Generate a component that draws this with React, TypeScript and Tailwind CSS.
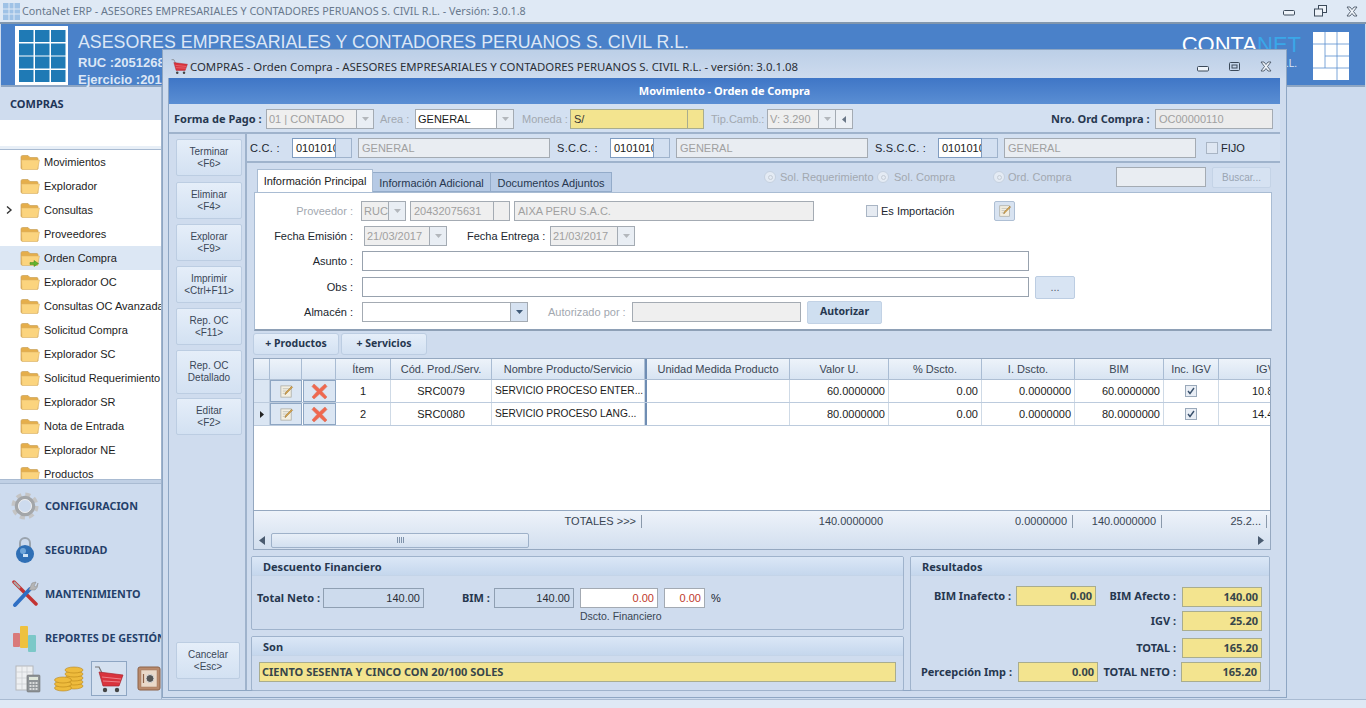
import React from "react";

const menuItems = [
  "Movimientos",
  "Explorador",
  "Consultas",
  "Proveedores",
  "Orden Compra",
  "Explorador OC",
  "Consultas OC Avanzada",
  "Solicitud Compra",
  "Explorador SC",
  "Solicitud Requerimiento",
  "Explorador SR",
  "Nota de Entrada",
  "Explorador NE",
  "Productos",
];

const sideButtons = [
  { label: ["Terminar", "<F6>"], cls: "h-[37px] mb-[6px]" },
  { label: ["Eliminar", "<F4>"], cls: "h-[37px] mb-[5px]" },
  { label: ["Explorar", "<F9>"], cls: "h-[37px] mb-[5px]" },
  { label: ["Imprimir", "<Ctrl+F11>"], cls: "h-[37px] mb-[5px]" },
  { label: ["Rep. OC", "<F11>"], cls: "h-[37px] mb-[5px]" },
  { label: ["Rep. OC", "Detallado"], cls: "h-[44px] mb-[4px]" },
  { label: ["Editar", "<F2>"], cls: "h-[37px]" },
];

const columns = ["", "", "", "Ítem", "Cód. Prod./Serv.", "Nombre Producto/Servicio", "Unidad Medida Producto", "Valor U.", "% Dscto.", "I. Dscto.", "BIM", "Inc. IGV", "IGV"];

const rows = [
  { item: "1", cod: "SRC0079", name: "SERVICIO PROCESO ENTER...", valor: "60.0000000", bim: "60.0000000", igv: "10.8000000" },
  { item: "2", cod: "SRC0080", name: "SERVICIO PROCESO LANG...", valor: "80.0000000", bim: "80.0000000", igv: "14.4000000" },
];

const gridCols = "grid grid-cols-[16px_32px_34px_55px_101px_153px_145px_99px_93px_93px_89px_55px_94px] w-[1059px]";

function Folder({ arrow }: { arrow?: boolean }) {
  return (
    <svg width="21" height="17" viewBox="0 0 21 17" className="shrink-0">
      <path d="M1 3 Q1 1.5 2.5 1.5 H8 L10 3.5 H17 Q18 3.5 18 5 V15 H2 Q1 15 1 14 Z" fill="#e5ae4b" stroke="#c9a25c" strokeWidth="0.7" />
      <path d="M1.5 6 H19.5 L17.5 15.5 H2 Z" fill="#fbd47e" stroke="#d9b068" strokeWidth="0.5" />
      {arrow && <path d="M10 12.5 H14 V10.5 L18.5 13.5 L14 16.5 V14.5 H10 Z" fill="#62b32f" stroke="#3e8a1a" strokeWidth="0.5" />}
    </svg>
  );
}

function LogoLeft() {
  return (
    <svg width="53" height="59" viewBox="0 0 53 59" className="shrink-0">
      <rect width="53" height="59" fill="#fff" />
      {[4, 20, 36].map((x) =>
        [4, 17.5, 30.5, 44].map((y) => <rect key={`${x}-${y}`} x={x} y={y} width="14.5" height="12" fill="#1f7ab5" />)
      )}
    </svg>
  );
}

function LogoRight() {
  return (
    <svg width="36" height="48" viewBox="0 0 36 48" className="shrink-0">
      <rect width="36" height="48" fill="#fff" />
      <path d="M12 0 V36 M24 0 V48 M0 12 H36 M12 24 H36 M0 36 H36" stroke="#5b8fcf" strokeWidth="0.8" />
    </svg>
  );
}

function EditIcon({ size = 15 }: { size?: number }) {
  return (
    <svg width={size} height={size} viewBox="0 0 16 16">
      <rect x="2" y="2" width="11" height="12" fill="#f3efe2" stroke="#a9a9a0" strokeWidth="0.8" />
      <path d="M4 5 H11 M4 7.5 H9 M4 10 H8" stroke="#b9b9b0" strokeWidth="0.8" />
      <path d="M14.5 3.5 L8 10 L6.5 11.5 L7 9 L13.5 2.5 Z" fill="#d9a548" stroke="#8f6a2e" strokeWidth="0.5" />
    </svg>
  );
}

function CrossIcon() {
  return (
    <svg width="17" height="17" viewBox="0 0 17 17">
      <path d="M3 1 L8.5 6 L14 1 L16 3.5 L11 8.5 L16 14 L14 16 L8.5 11 L3 16 L1 14 L6 8.5 L1 3.5 Z" fill="#f0674f" stroke="#d9785f" strokeWidth="0.6" />
    </svg>
  );
}

function Cart({ size = 30 }: { size?: number }) {
  return (
    <svg width={size} height={size} viewBox="0 0 30 30">
      <path d="M1 3 H5 L8 9" fill="none" stroke="#777" strokeWidth="1.2" />
      <path d="M5 8 L29 11 L25 22 H9 Z" fill="#d9333d" stroke="#a9222c" strokeWidth="0.7" />
      <path d="M8 13 L27 15 M9 17 L26 18" stroke="#ee7f88" strokeWidth="1" />
      <circle cx="11" cy="26" r="2.2" fill="#444" />
      <circle cx="23" cy="26" r="2.2" fill="#444" />
    </svg>
  );
}

function GearIcon() {
  return (
    <svg width="28" height="28" viewBox="0 0 28 28">
      <circle cx="14" cy="14" r="11.5" fill="none" stroke="#c4c4c4" strokeWidth="4" strokeDasharray="5 4.03" />
      <circle cx="14" cy="14" r="8.5" fill="none" stroke="#a3a6a9" strokeWidth="3.5" />
      <circle cx="14" cy="14" r="6.5" fill="none" stroke="#eeeeee" strokeWidth="1" />
    </svg>
  );
}

function LockIcon() {
  return (
    <svg width="22" height="28" viewBox="0 0 22 28">
      <path d="M6 13 V7 A5 5 0 0 1 16 7 V13" fill="none" stroke="#9aa3ad" strokeWidth="2" />
      <circle cx="11" cy="18" r="9" fill="#2f6fb5" />
      <circle cx="9" cy="15" r="3" fill="#6fa5d9" />
      <path d="M9 18 H14 V21 H9 Z" fill="#cfe3f5" />
    </svg>
  );
}

function ToolsIcon() {
  return (
    <svg width="28" height="28" viewBox="0 0 28 28">
      <path d="M3 2 L25 24" stroke="#c33333" strokeWidth="3.5" strokeLinecap="round" />
      <path d="M3 2 L9 8" stroke="#a9a9a9" strokeWidth="2" />
      <path d="M4 25 L19 9" stroke="#2f6fc4" strokeWidth="4" strokeLinecap="round" />
      <path d="M18 10 L21 3 L25 2 L23 6 L25 7 L27 3 Q27 8 24 10 Z" fill="#b5b5b5" stroke="#888" strokeWidth="0.5" />
    </svg>
  );
}

function BarsIcon() {
  return (
    <svg width="26" height="28" viewBox="0 0 26 28">
      <rect x="1" y="9" width="7" height="14" rx="1" fill="#d97a7a" />
      <rect x="8" y="2" width="8" height="22" rx="1" fill="#eec13e" />
      <rect x="16" y="11" width="8" height="17" rx="1" fill="#7cc8c8" />
    </svg>
  );
}

function CalcIcon() {
  return (
    <svg width="26" height="28" viewBox="0 0 26 28">
      <rect x="1" y="1" width="17" height="24" fill="#eef0f2" stroke="#b5b8bb" />
      <path d="M1 7 H18 M1 13 H18 M1 19 H18 M7 1 V25 M12 1 V25" stroke="#c9ccd0" strokeWidth="0.7" />
      <rect x="12" y="10" width="13" height="17" rx="1" fill="#8f9498" stroke="#666" strokeWidth="0.5" />
      <rect x="14" y="12" width="9" height="3" fill="#dfe6da" />
      <path d="M14.5 18 H23 M14.5 21 H23 M14.5 24 H23" stroke="#f2f2f2" strokeWidth="1.4" strokeDasharray="2 1" />
    </svg>
  );
}

function CoinsIcon() {
  return (
    <svg width="30" height="28" viewBox="0 0 30 28">
      <g fill="#eebb3c" stroke="#b98518" strokeWidth="0.6">
        {[18, 14, 10, 6, 2].map((y) => <ellipse key={y} cx="20" cy={y + 3} rx="9" ry="3" />)}
        {[22, 18, 14].map((y) => <ellipse key={y} cx="9" cy={y + 1} rx="8.5" ry="3" />)}
      </g>
    </svg>
  );
}

function SafeIcon() {
  return (
    <svg width="24" height="26" viewBox="0 0 24 26">
      <rect x="1" y="1" width="22" height="23" rx="2" fill="#b98a6c" stroke="#8c6248" />
      <rect x="4" y="4" width="16" height="17" fill="#ead9c9" stroke="#a37a5e" strokeWidth="0.5" />
      <circle cx="13" cy="12.5" r="4" fill="#555" stroke="#ddd" />
      <path d="M6.5 8 V17" stroke="#8c6248" strokeWidth="1.2" />
    </svg>
  );
}

function Arrow({ muted }: { muted?: boolean }) {
  return (
    <svg width="7" height="4" viewBox="0 0 7 4">
      <path d="M0 0 H7 L3.5 4 Z" fill={muted ? "#b3b7bc" : "#3f5a78"} />
    </svg>
  );
}

function Box({ className = "", children, disabled = true }: { className?: string; children?: React.ReactNode; disabled?: boolean }) {
  return (
    <div
      className={`h-5 shrink-0 overflow-hidden whitespace-nowrap border border-[#a4abb3] px-[3px] text-[11px] leading-[18px] ${disabled ? "bg-[#efefef] text-[#a0a0a0]" : "bg-white text-[#1a1a1a]"} ${className}`}
    >
      {children}
    </div>
  );
}

function Combo({ className = "", children, disabled = true, active }: { className?: string; children?: React.ReactNode; disabled?: boolean; active?: boolean }) {
  return (
    <div className={`flex h-5 shrink-0 ${className}`}>
      <Box disabled={disabled} className="min-w-0 flex-1 !px-[2px]">{children}</Box>
      <div className={`flex w-[17px] shrink-0 items-center justify-center border border-l-0 border-[#a4abb3] ${active ? "bg-[#d6e2f1]" : "bg-[#e9eef4]"}`}>
        <Arrow muted={!active} />
      </div>
    </div>
  );
}

function CodeField({ className = "" }: { className?: string }) {
  return (
    <div className={`flex h-5 shrink-0 ${className}`}>
      <Box disabled={false} className="w-[44px] !border-[#7f9cc0]">0101010</Box>
      <div className="w-4 shrink-0 border border-l-0 border-[#9fb3cc] bg-[#d3e0f1]" />
    </div>
  );
}

function Label({ className = "", children, muted }: { className?: string; children: React.ReactNode; muted?: boolean }) {
  return <span className={`shrink-0 whitespace-nowrap text-[11px] leading-5 ${muted ? "text-[#a2a8b0]" : "text-[#20262e]"} ${className}`}>{children}</span>;
}

function BoldLabel({ className = "", children }: { className?: string; children: React.ReactNode }) {
  return <span className={`shrink-0 whitespace-nowrap font-['Noto_Sans',sans-serif] text-[11px] font-bold leading-5 text-[#26374f] ${className}`}>{children}</span>;
}

function Radio({ className = "" }: { className?: string }) {
  return (
    <span className={`flex h-3 w-3 shrink-0 items-center justify-center rounded-full border border-[#c5d1e0] bg-[#e4ebf4] ${className}`}>
      <span className="h-[5px] w-[5px] rounded-full border border-[#c5ccd5]" />
    </span>
  );
}

function Yellow({ className = "", children }: { className?: string; children?: React.ReactNode }) {
  return (
    <div className={`h-5 shrink-0 border border-[#a9ad8e] bg-[#f3e48f] px-[3px] text-right font-['Noto_Sans',sans-serif] text-[11px] font-bold leading-[18px] text-[#37464a] ${className}`}>{children}</div>
  );
}

function PanelTitle({ children }: { children: React.ReactNode }) {
  return (
    <div className="h-[19px] border-b border-[#c4d4e8] bg-gradient-to-b from-[#dbe7f6] to-[#c5d7ed] pl-[11px] font-['Noto_Sans',sans-serif] text-[11px] font-bold leading-[19px] text-[#26374f]">
      {children}
    </div>
  );
}

function WinButtons({ child }: { child?: boolean }) {
  const stroke = "#3c4a5a";
  return (
    <>
      <svg width="12" height="6" viewBox="0 0 12 6" className="mt-[4px]"><rect x="0.5" y="0.5" width="11" height="4.5" rx="1" fill="#eef3f9" stroke={stroke} /></svg>
      {child ? (
        <svg width="11" height="10" viewBox="0 0 11 10" className="ml-[20px]"><rect x="0.5" y="0.5" width="10" height="8" rx="1" fill="none" stroke={stroke} /><rect x="3" y="3" width="5" height="3" fill="none" stroke={stroke} /></svg>
      ) : (
        <svg width="13" height="12" viewBox="0 0 13 12" className="ml-[19px]"><rect x="4.5" y="0.5" width="8" height="7" fill="#eef3f9" stroke={stroke} /><rect x="0.5" y="4" width="8" height="7" fill="#eef3f9" stroke={stroke} /></svg>
      )}
      <svg width="12" height="11" viewBox="0 0 12 11" className={child ? "ml-[20px]" : "ml-[19px]"}>
        <path d="M1 1 L4 1 L6 3.5 L8 1 L11 1 L7.5 5.5 L11 10 L8 10 L6 7.5 L4 10 L1 10 L4.5 5.5 Z" fill="#eef3f9" stroke={stroke} strokeWidth="0.8" />
      </svg>
    </>
  );
}

function Sidebar() {
  return (
    <aside className="flex w-[162px] shrink-0 flex-col border-r border-[#9fb3cc] bg-[#cddbee]">
      <div className="h-[33px] bg-[#cfdcee] pl-[10px] font-['Noto_Sans',sans-serif] text-[11px] font-bold leading-[34px] text-[#1e3558]">COMPRAS</div>
      <div className="h-[26px] bg-white" />
      <div className="h-[3px] bg-[#e8eff7]" />
      <div className="h-[331px] overflow-hidden border-y border-[#a9bbd2] bg-white">
        {menuItems.map((item, i) => (
          <div key={item} className={`flex h-6 items-center whitespace-nowrap pl-[6px] text-[11px] text-[#1c1c1c] ${item === "Orden Compra" ? "bg-[#dce7f4]" : ""}`}>
            <span className="flex w-[14px] shrink-0">
              {item === "Consultas" && (
                <svg width="7" height="8" viewBox="0 0 7 8"><path d="M1 0.5 L5 4 L1 7.5" fill="none" stroke="#333" strokeWidth="1.4" /></svg>
              )}
            </span>
            <Folder arrow={i === 4} />
            <span className="ml-[3px]">{item}</span>
          </div>
        ))}
      </div>
      <div className="h-[4px] border-b border-[#a9bbd2] bg-[#c0d0e5]" />
      <div className="flex-1 overflow-hidden">
        {[
          { t: "CONFIGURACION", icon: <GearIcon /> },
          { t: "SEGURIDAD", icon: <LockIcon /> },
          { t: "MANTENIMIENTO", icon: <ToolsIcon /> },
          { t: "REPORTES DE GESTIÓN", icon: <BarsIcon /> },
        ].map(({ t, icon }) => (
          <div key={t} className="flex h-[44px] items-center whitespace-nowrap font-['Noto_Sans',sans-serif] text-[10.8px] font-bold text-[#24406a]">
            <span className="flex w-[45px] shrink-0 justify-center pl-[5px]">{icon}</span>
            {t}
          </div>
        ))}
        <div className="flex h-[37px] items-center pl-[15px]">
          <CalcIcon />
          <span className="ml-[13px]"><CoinsIcon /></span>
          <span className="ml-[7px] flex h-[35px] w-[36px] items-center justify-center border border-[#8ea6c3] bg-[#d5e1f0]"><Cart /></span>
          <span className="ml-[10px]"><SafeIcon /></span>
        </div>
      </div>
    </aside>
  );
}

function ProductGrid() {
  return (
    <div className="ml-[6px] mt-[3px] w-[1018px] overflow-hidden border border-[#95a8c0] bg-white">
      <div className="h-[151px] overflow-hidden">
        <div className={`${gridCols} h-[21px] border-b border-[#aebfd4]`}>
          {columns.map((c, i) => (
            <div key={i} className={`overflow-hidden whitespace-nowrap border-r border-[#a9bcd3] bg-gradient-to-b from-[#edf3fa] to-[#d8e4f2] text-center text-[11px] leading-[20px] text-[#3a4654] ${i === 6 ? "border-l-2 border-l-[#6f8db3]" : ""}`}>
              {c}
            </div>
          ))}
        </div>
        {rows.map((r, i) => (
          <div key={r.item} className={`${gridCols} h-[23px] border-b border-[#bccbdd] text-[11px] leading-[22px] text-[#1c1c1c]`}>
            <div className="flex items-center justify-center border-r border-[#bccbdd] bg-[#dbe6f3]">
              {i === 1 && <svg width="4" height="7" viewBox="0 0 4 7"><path d="M0 0 L4 3.5 L0 7 Z" fill="#222" /></svg>}
            </div>
            <div className="flex items-center justify-center border border-[#8ea6c3] bg-[#dbe6f3]"><EditIcon /></div>
            <div className="ml-[1px] flex items-center justify-center border border-[#8ea6c3] bg-[#dbe6f3]"><CrossIcon /></div>
            <div className="border-r border-[#cfdae6] text-center">{r.item}</div>
            <div className="border-r border-[#cfdae6] text-center">{r.cod}</div>
            <div className="overflow-hidden whitespace-nowrap border-r border-[#cfdae6] pl-[3px] text-[10.2px]">{r.name}</div>
            <div className="border-l-2 border-r border-[#cfdae6] border-l-[#6f8db3]" />
            <div className="border-r border-[#cfdae6] pr-[3px] text-right">{r.valor}</div>
            <div className="border-r border-[#cfdae6] pr-[3px] text-right">0.00</div>
            <div className="border-r border-[#cfdae6] pr-[3px] text-right">0.0000000</div>
            <div className="border-r border-[#cfdae6] pr-[3px] text-right">{r.bim}</div>
            <div className="flex items-center justify-center border-r border-[#cfdae6]">
              <span className="flex h-[12px] w-[12px] items-center justify-center border border-[#9aa9ba] bg-[#e9eef5]">
                <svg width="8" height="8" viewBox="0 0 8 8"><path d="M1 4 L3 6.5 L7 1" fill="none" stroke="#39506b" strokeWidth="1.4" /></svg>
              </span>
            </div>
            <div className="pr-[3px] text-right">{r.igv}</div>
          </div>
        ))}
      </div>
      <div className="flex h-[21px] items-center border-t border-[#95a8c0] bg-gradient-to-b from-[#eef3fa] to-[#dfe8f4] text-[11px] text-[#3a4654]">
        <span className="w-[388px] shrink-0 border-r border-[#8a99ab] pr-[5px] text-right leading-[13px]">TOTALES &gt;&gt;&gt;</span>
        <span className="w-[245px] shrink-0 pr-[4px] text-right leading-[13px]">140.0000000</span>
        <span className="w-[186px] shrink-0 border-r border-[#8a99ab] pr-[5px] text-right leading-[13px]">0.0000000</span>
        <span className="w-[89px] shrink-0 border-r border-[#8a99ab] pr-[5px] text-right leading-[13px]">140.0000000</span>
        <span className="w-[105px] shrink-0 border-r border-[#8a99ab] pr-[5px] text-right leading-[13px]">25.2...</span>
      </div>
      <div className="flex h-[18px] items-center bg-gradient-to-b from-[#dfe8f4] to-[#d3dfef] pl-[5px] pr-[6px]">
        <svg width="6" height="9" viewBox="0 0 6 9"><path d="M6 0 V9 L0 4.5 Z" fill="#4a5b70" /></svg>
        <div className="ml-[6px] flex h-[15px] w-[258px] items-center justify-center rounded-[2px] border border-[#9eb1c9] bg-gradient-to-b from-[#e8eff8] to-[#d3e0f0]">
          <div className="h-[6px] w-[7px] bg-[repeating-linear-gradient(90deg,#7f93ab_0,#7f93ab_1px,transparent_1px,transparent_2px)]" />
        </div>
        <div className="flex-1" />
        <svg width="6" height="9" viewBox="0 0 6 9"><path d="M0 0 V9 L6 4.5 Z" fill="#4a5b70" /></svg>
      </div>
    </div>
  );
}

function ChildWindow() {
  return (
    <div className="absolute left-[162px] top-[49px] flex h-[649px] w-[1125px] flex-col border border-[#8ea6c3] bg-[#cfdcee]">
      <div className="flex h-[28px] shrink-0 items-center bg-gradient-to-b from-[#bccfe7] to-[#cddbee] pl-[8px] pr-[14px] pt-[5px]">
        <Cart size={17} />
        <span className="ml-[2px] whitespace-nowrap font-['Noto_Sans',sans-serif] text-[11.4px] text-[#2a2f36]">COMPRAS - Orden Compra - ASESORES EMPRESARIALES Y CONTADORES PERUANOS S. CIVIL R.L. - versión: 3.0.1.08</span>
        <span className="flex-1" />
        <WinButtons child />
      </div>
      <div className="mb-[6px] ml-[5px] mr-[6px] flex min-h-0 flex-1 flex-col border border-[#8ea6c3] border-t-0 border-r-0">
        <div className="h-[26px] shrink-0 bg-gradient-to-b from-[#3f76c6] to-[#5a8ed3] text-center font-['Noto_Sans',sans-serif] text-[11px] font-bold leading-[26px] text-white">
          Movimiento - Orden de Compra
        </div>
        {/* Forma de pago */}
        <div className="flex h-[30px] shrink-0 items-center border-b-2 border-[#9fb3cc] bg-[#d3e0f1] pl-[5px] pt-[2px]">
          <BoldLabel className="w-[92px]">Forma de Pago :</BoldLabel>
          <Combo className="w-[108px]">01 | CONTADO</Combo>
          <Label muted className="ml-[6px] w-[35px]">Area :</Label>
          <Combo disabled={false} className="w-[99px]">GENERAL</Combo>
          <Label muted className="ml-[8px] w-[48px]">Moneda :</Label>
          <div className="flex h-5 w-[134px] shrink-0 border border-[#a9ad8e] bg-[#f3e48f] pl-[3px] text-[11px] leading-[18px] text-[#333]">
            S/
            <span className="ml-auto w-[16px] border-l border-[#a9ad8e]" />
          </div>
          <Label muted className="ml-[7px] w-[56px]">Tip.Camb.:</Label>
          <Combo className="w-[69px]">V: 3.290</Combo>
          <div className="flex h-5 w-[17px] shrink-0 items-center justify-center border border-l-0 border-[#a4abb3] bg-[#ecf0f5]">
            <svg width="4" height="7" viewBox="0 0 4 7"><path d="M4 0 V7 L0 3.5 Z" fill="#6a7787" /></svg>
          </div>
          <BoldLabel className="ml-[198px] w-[104px]">Nro. Ord Compra :</BoldLabel>
          <Box className="w-[118px] !bg-[#ececec]">OC00000110</Box>
        </div>
        <div className="flex min-h-0 flex-1">
          {/* botones */}
          <div className="flex w-[78px] shrink-0 flex-col border-r-2 border-[#9fb3cc] pb-[11px] pl-[7px] pt-[5px]">
            {sideButtons.map((b) => (
              <button key={b.label[0] + b.label[1]} className={`w-[66px] shrink-0 rounded-[2px] border border-[#bccde2] bg-gradient-to-b from-[#e5eef9] to-[#d3e1f2] text-[10px] leading-[12px] text-[#3a4757] ${b.cls}`}>
                {b.label[0]}<br />{b.label[1]}
              </button>
            ))}
            <div className="flex-1" />
            <button className="h-[37px] w-[64px] shrink-0 rounded-[2px] border border-[#bccde2] bg-gradient-to-b from-[#e5eef9] to-[#d3e1f2] text-[10px] leading-[12px] text-[#3a4757]">
              Cancelar<br />&lt;Esc&gt;
            </button>
          </div>
          <div className="min-w-0 flex-1">
            {/* centros de costo */}
            <div className="flex h-[29px] items-center border-b-2 border-[#9fb3cc] bg-[#d3e0f1] pl-[3px]">
              <Label className="w-[42px] tracking-[0.3px]">C.C. :</Label>
              <CodeField />
              <Box className="ml-[6px] w-[192px] !bg-[#e9edf2]">GENERAL</Box>
              <Label className="ml-[7px] w-[53px] tracking-[0.3px]">S.C.C. :</Label>
              <CodeField />
              <Box className="ml-[6px] w-[192px] !bg-[#e9edf2]">GENERAL</Box>
              <Label className="ml-[7px] w-[63px] tracking-[0.2px]">S.S.C.C. :</Label>
              <CodeField />
              <Box className="ml-[6px] w-[192px] !bg-[#e9edf2]">GENERAL</Box>
              <span className="ml-[10px] h-[12px] w-[12px] shrink-0 border border-[#a9b5c4] bg-[#dfe7f2]" />
              <Label className="ml-[3px]">FIJO</Label>
            </div>
            {/* tabs */}
            <div className="flex h-[29px] items-end pl-[10px]">
              <div className="h-[23px] w-[116px] border border-b-0 border-[#a9bcd3] bg-white text-center text-[11px] leading-[22px] text-[#222]">Información Principal</div>
              <div className="h-[20px] w-[118px] border border-l-0 border-[#93abc9] bg-[#b6cae5] text-center text-[11px] leading-[21px] text-[#26374f]">Información Adicional</div>
              <div className="h-[20px] w-[121px] border border-l-0 border-[#93abc9] bg-[#b6cae5] text-center text-[11px] leading-[21px] text-[#26374f]">Documentos Adjuntos</div>
              <div className="flex h-[27px] items-center self-start pt-[1px]">
                <Radio className="ml-[152px]" />
                <Label muted className="ml-[4px] w-[97px]">Sol. Requerimiento</Label>
                <Radio />
                <Label muted className="ml-[5px] w-[99px]">Sol. Compra</Label>
                <Radio />
                <Label muted className="ml-[3px] w-[108px]">Ord. Compra</Label>
                <Box className="w-[90px] !bg-[#e9edf2]" />
                <button className="ml-[6px] h-[21px] w-[59px] shrink-0 rounded-[2px] border border-[#c4d3e6] bg-[#d6e2f2] text-[10px] text-[#9aa5b3]">Buscar...</button>
              </div>
            </div>
            {/* panel principal */}
            <div className="ml-[7px] flex h-[139px] w-[1018px] flex-col border border-[#a9bcd3] border-b-2 border-b-[#8ea0b6] bg-white pt-[8px]">
              <div className="flex h-5 items-center">
                <Label muted className="w-[98px] text-right">Proveedor :</Label>
                <Combo className="ml-[8px] w-[45px]">RUC</Combo>
                <Box className="ml-[4px] w-[84px]">20432075631</Box>
                <Box className="w-[16px] !border-l-0" />
                <Box className="ml-[4px] w-[300px]">AIXA PERU S.A.C.</Box>
                <span className="ml-[52px] h-[12px] w-[12px] shrink-0 border border-[#a9b5c4] bg-[#e6ebf2]" />
                <Label className="ml-[3px] w-[113px]">Es Importación</Label>
                <span className="flex h-[20px] w-[21px] shrink-0 items-center justify-center rounded-[2px] border border-[#aebfd4] bg-[#d8e3f1]"><EditIcon size={14} /></span>
              </div>
              <div className="mt-[5px] flex h-5 items-center">
                <Label className="w-[98px] text-right">Fecha Emisión :</Label>
                <Combo className="ml-[11px] w-[83px]">21/03/2017</Combo>
                <Label className="ml-[20px] w-[83px]">Fecha Entrega :</Label>
                <Combo className="w-[85px]">21/03/2017</Combo>
              </div>
              <div className="mt-[5px] flex h-5 items-center">
                <Label className="w-[98px] text-right">Asunto :</Label>
                <Box disabled={false} className="ml-[9px] w-[667px] !border-[#98a2ae]" />
              </div>
              <div className="mt-[6px] flex h-5 items-center">
                <Label className="w-[98px] text-right">Obs :</Label>
                <Box disabled={false} className="ml-[9px] w-[667px] !border-[#98a2ae]" />
                <button className="ml-[6px] h-[23px] w-[40px] shrink-0 rounded-[2px] border border-[#bccde2] bg-[#d8e4f3] text-[11px] leading-3 text-[#55626f]">...</button>
              </div>
              <div className="mt-[5px] flex h-5 items-center">
                <Label className="w-[98px] text-right">Almacén :</Label>
                <Combo disabled={false} active className="ml-[9px] w-[166px]" />
                <Label muted className="ml-[20px] w-[84px]">Autorizado por :</Label>
                <Box className="w-[169px]" />
                <button className="ml-[6px] h-[23px] w-[75px] shrink-0 rounded-[2px] border border-[#c2d2e5] bg-[#cfdff0] font-['Noto_Sans',sans-serif] text-[10.5px] font-bold text-[#26374f]">Autorizar</button>
              </div>
            </div>
            {/* botones grid */}
            <div className="ml-[6px] mt-[2px] flex gap-[2px]">
              <button className="h-[22px] w-[86px] rounded-[3px] border border-[#bccde2] bg-gradient-to-b from-[#e5eef9] to-[#d3e1f2] font-['Noto_Sans',sans-serif] text-[10.5px] font-bold text-[#26374f]">+ Productos</button>
              <button className="h-[22px] w-[86px] rounded-[3px] border border-[#bccde2] bg-gradient-to-b from-[#e5eef9] to-[#d3e1f2] font-['Noto_Sans',sans-serif] text-[10.5px] font-bold text-[#26374f]">+ Servicios</button>
            </div>
            <ProductGrid />
            {/* totales */}
            <div className="ml-[4px] mt-[6px] flex gap-[6px]">
              <div className="w-[653px] shrink-0">
                <div className="h-[74px] overflow-hidden rounded-[2px] border border-[#9fb3cc]">
                  <PanelTitle>Descuento Financiero</PanelTitle>
                  <div className="mt-[12px] flex h-5 items-center pl-[5px]">
                    <BoldLabel className="w-[66px]">Total Neto :</BoldLabel>
                    <Box className="w-[101px] !border-[#8f9fb2] !bg-[#cddbed] text-right !text-[#2a2f36]">140.00</Box>
                    <BoldLabel className="ml-[38px] w-[32px]">BIM :</BoldLabel>
                    <Box className="w-[80px] !border-[#8f9fb2] !bg-[#cddbed] text-right !text-[#2a2f36]">140.00</Box>
                    <Box disabled={false} className="ml-[6px] w-[78px] !border-[#a3aab3] text-right !text-[#c0392b]">0.00</Box>
                    <Box disabled={false} className="ml-[6px] w-[41px] !border-[#a3aab3] text-right !text-[#c0392b]">0.00</Box>
                    <Label className="ml-[6px]">%</Label>
                  </div>
                  <div className="ml-[328px] whitespace-nowrap text-[10.5px] leading-4 text-[#3a4654]">Dscto. Financiero</div>
                </div>
                <div className="mt-[6px] h-[55px] overflow-hidden rounded-[2px] border border-[#9fb3cc]">
                  <PanelTitle>Son</PanelTitle>
                  <div className="mx-[7px] mt-[6px] h-5 border border-[#a9ad8e] bg-[#f3e48f] pl-[2px] font-['Noto_Sans',sans-serif] text-[11px] font-bold leading-[18px] text-[#37464a]">
                    CIENTO SESENTA Y CINCO CON 20/100 SOLES
                  </div>
                </div>
              </div>
              <div className="h-[135px] w-[360px] shrink-0 overflow-hidden rounded-[2px] border border-[#9fb3cc]">
                <PanelTitle>Resultados</PanelTitle>
                <div className="mt-[10px] flex h-5 items-center">
                  <BoldLabel className="w-[100px] text-right">BIM Inafecto :</BoldLabel>
                  <Yellow className="ml-[5px] w-[80px]">0.00</Yellow>
                  <BoldLabel className="ml-[10px] w-[70px] text-right">BIM Afecto :</BoldLabel>
                  <Yellow className="ml-[6px] mt-[2px] w-[80px]">140.00</Yellow>
                </div>
                <div className="mt-[5px] flex h-5 items-center justify-end pr-[7px]">
                  <BoldLabel>IGV :</BoldLabel>
                  <Yellow className="ml-[6px] w-[80px]">25.20</Yellow>
                </div>
                <div className="mt-[7px] flex h-5 items-center justify-end pr-[7px]">
                  <BoldLabel>TOTAL :</BoldLabel>
                  <Yellow className="ml-[6px] w-[80px]">165.20</Yellow>
                </div>
                <div className="mt-[4px] flex h-5 items-center">
                  <BoldLabel className="ml-[7px] w-[94px] text-right">Percepción Imp :</BoldLabel>
                  <Yellow className="ml-[6px] w-[80px]">0.00</Yellow>
                  <BoldLabel className="ml-[5px] w-[73px] text-right">TOTAL NETO :</BoldLabel>
                  <Yellow className="ml-[5px] w-[80px]">165.20</Yellow>
                </div>
              </div>
            </div>
          </div>
        </div>
      </div>
    </div>
  );
}

export default function App() {
  return (
    <div className="relative flex h-[708px] w-[1366px] flex-col overflow-hidden bg-[#cddbee] font-['Liberation_Sans',sans-serif]">
      <div className="flex h-[24px] shrink-0 items-center border-b-2 border-[#8297ad] bg-[#dfe9f5] pr-[8px]">
        <svg width="17" height="17" viewBox="0 0 17 17" className="ml-[3px]">
          <rect width="17" height="17" fill="#9fc2e6" />
          <path d="M6 0 V17 M11 0 V17 M0 6 H17 M0 11 H17" stroke="#dfe9f5" strokeWidth="1" />
        </svg>
        <span className="ml-[2px] whitespace-nowrap font-['Noto_Sans',sans-serif] text-[10.75px] text-[#67788c]">ContaNet ERP - ASESORES EMPRESARIALES Y CONTADORES PERUANOS S. CIVIL R.L. - Versión: 3.0.1.8</span>
        <span className="flex-1" />
        <WinButtons />
      </div>
      <header className="mx-[1px] flex h-[63px] shrink-0 items-start border-b-2 border-[#8ea6c3] bg-[#4a81c9] pl-[14px] pr-[16px] pt-[2px]">
        <LogoLeft />
        <div className="ml-[10px] pt-[3px] text-[#dce7f6]">
          <div className="whitespace-nowrap text-[17.8px] leading-[26px]">ASESORES EMPRESARIALES Y CONTADORES PERUANOS S. CIVIL R.L.</div>
          <div className="whitespace-nowrap text-[13px] font-bold leading-[15px]">RUC :20512685431</div>
          <div className="whitespace-nowrap text-[13px] font-bold leading-[19px]">Ejercicio :2017</div>
        </div>
        <div className="flex-1" />
        <div className="mr-[12px] mt-[8px] flex flex-col items-end">
          <div className="whitespace-nowrap text-[22px] leading-[22px] text-white">CONTA<span className="text-[#3aa7e8]">NET</span></div>
          <div className="mr-[4px] text-[10px] leading-[16px] text-[#dce7f6]">S. CIVIL R.L.</div>
        </div>
        <span className="mt-[6px]"><LogoRight /></span>
      </header>
      <div className="flex min-h-0 flex-1">
        <Sidebar />
        <div className="flex-1" />
      </div>
      <div className="h-[9px] shrink-0 border-t border-[#a9bbd2] bg-[#dfe9f5]" />
      <ChildWindow />
    </div>
  );
}
